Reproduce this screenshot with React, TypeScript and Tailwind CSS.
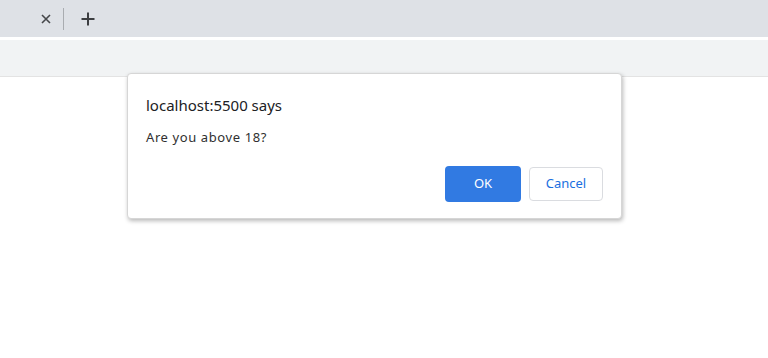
import React from 'react';

const App: React.FC = () => {
  return (
    <div className="relative h-[358px] w-[768px] overflow-hidden bg-white" style={{ fontFamily: '"Noto Sans", "Open Sans", sans-serif' }}>
      {/* tab strip */}
      <div className="flex h-[37px] items-center bg-[#dee1e6]">
        <div className="ml-[40px] flex h-[12px] w-[12px] items-center justify-center">
          <svg width="10" height="10" viewBox="0 0 10 10">
            <path d="M1 1 L9 9 M9 1 L1 9" stroke="#45474a" strokeWidth="1.6" />
          </svg>
        </div>
        <div className="ml-[11px] h-[22px] w-px bg-[#a9acb0]" />
        <div className="ml-[16px] flex items-center">
          <svg width="16" height="16" viewBox="0 0 16 16">
            <path d="M8 1.5 V14.5 M1.5 8 H14.5" stroke="#3c3e41" strokeWidth="2" />
          </svg>
        </div>
      </div>
      {/* toolbar */}
      <div className="h-[3px] bg-white" />
      <div className="h-[36px] bg-[#f1f3f4]" />
      <div className="h-px bg-[#e3e3e3]" />
      <div className="h-[281px] bg-white" />

      {/* alert dialog */}
      <div className="absolute left-[127px] top-[73px] flex h-[146px] w-[495px] flex-col rounded-[4px] border border-[#d6d6d6] bg-white px-[18px] shadow-[1px_2px_4px_rgba(0,0,0,0.28)]">
        <div className="mt-[21px] text-[15px] leading-[20px] text-[#202124]">localhost:5500 says</div>
        <div className="mt-[13px] text-[13px] leading-[18px] tracking-[0.6px] text-[#303030]">Are you above 18?</div>
        <div className="mb-[16px] mt-auto flex justify-end gap-[8px]">
          <button className="h-[36px] w-[76px] rounded-[4px] bg-[#317ae2] text-[13px] text-white">OK</button>
          <button className="mt-px h-[34px] w-[74px] rounded-[4px] border border-[#dadce0] bg-white text-[13px] text-[#1a6fe0]">Cancel</button>
        </div>
      </div>
    </div>
  );
};

export default App;
